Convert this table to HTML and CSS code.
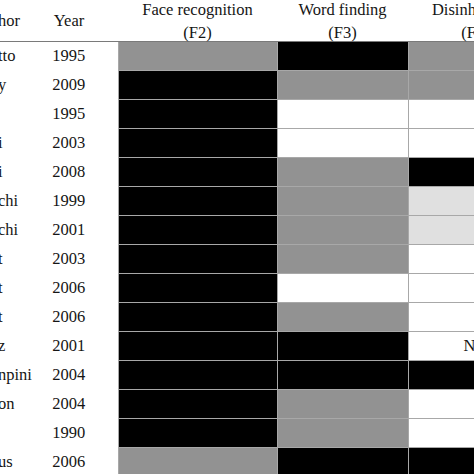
FILE: index.html
```html
<!DOCTYPE html>
<html>
<head>
<meta charset="UTF-8">
<title>Table</title>
<link rel="stylesheet" href="styles.css">
</head>
<body>
<table class="grid">
	<colgroup>
		<col class="c_author">
		<col class="c_year">
		<col class="c_f2">
		<col class="c_f3">
		<col class="c_f4">
	</colgroup>
	<thead>
		<tr>
			<th class="author"><div class="head">hor</div></th>
			<th><div class="head">Year</div></th>
			<th><div class="head"><span>Face recognition</span><span>(F2)</span></div></th>
			<th><div class="head"><span>Word finding</span><span>(F3)</span></div></th>
			<th><div class="head"><span>Disinhibition</span><span>(F4)</span></div></th>
		</tr>
	</thead>
	<tbody>
		<tr><td class="author">tto</td><td>1995</td><td class="g"></td><td class="b"></td><td class="g"></td></tr>
		<tr><td class="author">y</td><td>2009</td><td class="b"></td><td class="g"></td><td class="g"></td></tr>
		<tr><td class="author"></td><td>1995</td><td class="b"></td><td class="w"></td><td class="w"></td></tr>
		<tr><td class="author">i</td><td>2003</td><td class="b"></td><td class="w"></td><td class="w"></td></tr>
		<tr><td class="author">i</td><td>2008</td><td class="b"></td><td class="g"></td><td class="b"></td></tr>
		<tr><td class="author">chi</td><td>1999</td><td class="b"></td><td class="g"></td><td class="l"></td></tr>
		<tr><td class="author">chi</td><td>2001</td><td class="b"></td><td class="g"></td><td class="l"></td></tr>
		<tr><td class="author">t</td><td>2003</td><td class="b"></td><td class="g"></td><td class="w"></td></tr>
		<tr><td class="author">t</td><td>2006</td><td class="b"></td><td class="w"></td><td class="w"></td></tr>
		<tr><td class="author">t</td><td>2006</td><td class="b"></td><td class="g"></td><td class="w"></td></tr>
		<tr><td class="author">z</td><td>2001</td><td class="b"></td><td class="b"></td><td class="w">NA</td></tr>
		<tr><td class="author">npini</td><td>2004</td><td class="b"></td><td class="b"></td><td class="b"></td></tr>
		<tr><td class="author">on</td><td>2004</td><td class="b"></td><td class="g"></td><td class="w"></td></tr>
		<tr><td class="author"></td><td>1990</td><td class="b"></td><td class="g"></td><td class="w"></td></tr>
		<tr><td class="author">us</td><td>2006</td><td class="g"></td><td class="b"></td><td class="b"></td></tr>
	</tbody>
</table>
</body>
</html>
```

FILE: styles.css
```css
body {
	margin: 0;
	overflow: hidden;
	background-color: #FFFFFF;
	font-family: "Liberation Serif", "Times New Roman", serif;
	font-size: 16.5px;
	color: #151515;
}
.grid {
	margin-left: -2px;
	border-collapse: collapse;
	table-layout: fixed;
	width: 545px;
}
.c_author {
	width: 22px;
}
.c_year {
	width: 98px;
}
.c_f2 {
	width: 159px;
}
.c_f3 {
	width: 131px;
}
.c_f4 {
	width: 135px;
}
th {
	padding: 0;
	font-weight: normal;
	text-align: center;
	white-space: nowrap;
	border-bottom: 1px solid #7A7A7A;
}
.head {
	height: 41px;
	display: flex;
	flex-direction: column;
	justify-content: center;
	align-items: center;
	line-height: 23px;
}
th.author .head {
	align-items: flex-start;
}
td {
	height: 28px;
	padding: 0;
	text-align: center;
	vertical-align: middle;
	white-space: nowrap;
}
.author {
	text-align: left;
	overflow: visible;
}
.b, .g, .w, .l {
	border: 1px solid #A8A8A8;
}
.b {
	background-color: #000000;
}
.g {
	background-color: #929292;
}
.w {
	background-color: #FFFFFF;
}
.l {
	background-color: #E0E0E0;
}
```
